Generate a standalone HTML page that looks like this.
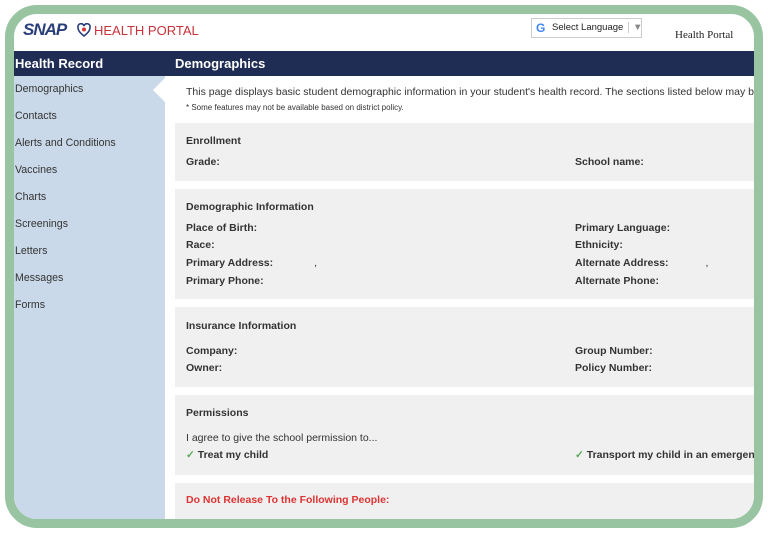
<!DOCTYPE html>
<html><head><style>
*{margin:0;padding:0;box-sizing:border-box}
body{width:768px;height:535px;background:#fff;font-family:"Liberation Sans",Arial,sans-serif;position:relative;overflow:hidden}
.frame{position:absolute;left:5px;top:5px;width:758px;height:523px;border:9px solid #98c4a1;border-radius:32px;overflow:hidden;background:#fff}
.in{position:absolute;left:0;top:0;width:740px;height:505px}
.nav{position:absolute;left:0;top:37px;width:740px;height:25px;background:#1f2d55;color:#fff;font-weight:bold;font-size:13px}
.side{position:absolute;left:0;top:62px;width:151px;height:450px;background:#cad9e9}
.side div{font-size:10.6px;color:#333;height:27px;line-height:27px;padding-left:1px}
.p{position:absolute;left:161px;width:600px;background:#f0f0f0}
.t{position:absolute;font-size:10.5px;color:#333;font-weight:bold;white-space:nowrap}
.n{font-weight:normal}
</style></head><body>
<div class="frame"><div class="in">
<div style="position:absolute;left:9px;top:6px;font-size:17px;font-weight:900;font-style:italic;color:#2a3f7a;letter-spacing:-1px">SNAP</div>
<svg style="position:absolute;left:63px;top:9px" width="14" height="14" viewBox="0 0 14 14"><path d="M7 13C2 9 1 7 1 4.5A3 3 0 0 1 7 3a3 3 0 0 1 6 1.5C13 7 12 9 7 13Z" fill="none" stroke="#2a3f7a" stroke-width="1.6"/><circle cx="7" cy="6.5" r="2" fill="#d33"/></svg>
<div style="position:absolute;left:80px;top:9px;font-size:13px;color:#c8323a">HEALTH PORTAL</div>
<div style="position:absolute;left:517px;top:4px;width:111px;height:20px;border:1px solid #ccc;font-size:9.5px;line-height:18px;padding-left:20px;color:#222;white-space:nowrap">Select Language <span style="color:#888;border-left:1px solid #ccc;padding-left:4px;margin-left:2px">▼</span><span style="position:absolute;left:4px;top:0;color:#4285f4;font-weight:bold;font-size:12px">G</span></div>
<div style="position:absolute;left:661px;top:15px;font-family:'Liberation Serif',serif;font-size:11px;color:#222">Health Portal</div>
<div class="nav"><span style="position:absolute;left:1px;top:5px">Health Record</span><span style="position:absolute;left:161px;top:5px">Demographics</span></div>
<div class="side"><div>Demographics</div><div>Contacts</div><div>Alerts and Conditions</div><div>Vaccines</div><div>Charts</div><div>Screenings</div><div>Letters</div><div>Messages</div><div>Forms</div></div>
<div style="position:absolute;left:139px;top:63px;width:0;height:0;border-top:13px solid transparent;border-bottom:13px solid transparent;border-right:13px solid #fff"></div>
<div class="t n" style="left:172px;top:72px;font-size:10.5px">This page displays basic student demographic information in your student's health record. The sections listed below may be</div>
<div class="t n" style="left:172px;top:89px;font-size:8px">* Some features may not be available based on district policy.</div>
<div class="p" style="top:109px;height:58px"></div>
<div class="t" style="left:172px;top:121px">Enrollment</div>
<div class="t" style="left:172px;top:142px">Grade:</div><div class="t" style="left:561px;top:142px">School name:</div>
<div class="p" style="top:175px;height:110px"></div>
<div class="t" style="left:172px;top:187px">Demographic Information</div>
<div class="t" style="left:172px;top:208px">Place of Birth:</div><div class="t" style="left:561px;top:208px">Primary Language:</div>
<div class="t" style="left:172px;top:225px">Race:</div><div class="t" style="left:561px;top:225px">Ethnicity:</div>
<div class="t" style="left:172px;top:243px">Primary Address: <span class="n" style="margin-left:38px">,</span></div><div class="t" style="left:561px;top:243px">Alternate Address: <span class="n" style="margin-left:34px">,</span></div>
<div class="t" style="left:172px;top:261px">Primary Phone:</div><div class="t" style="left:561px;top:261px">Alternate Phone:</div>
<div class="p" style="top:293px;height:80px"></div>
<div class="t" style="left:172px;top:306px">Insurance Information</div>
<div class="t" style="left:172px;top:331px">Company:</div><div class="t" style="left:561px;top:331px">Group Number:</div>
<div class="t" style="left:172px;top:348px">Owner:</div><div class="t" style="left:561px;top:348px">Policy Number:</div>
<div class="p" style="top:381px;height:80px"></div>
<div class="t" style="left:172px;top:393px">Permissions</div>
<div class="t n" style="left:172px;top:418px">I agree to give the school permission to...</div>
<div class="t" style="left:172px;top:435px"><span style="color:#5aa85a">✓</span> Treat my child</div>
<div class="t" style="left:561px;top:435px"><span style="color:#5aa85a">✓</span> Transport my child in an emergency</div>
<div class="p" style="top:469px;height:50px"></div>
<div class="t" style="left:172px;top:480px;color:#d33">Do Not Release To the Following People:</div>
</div></div>
</body></html>
